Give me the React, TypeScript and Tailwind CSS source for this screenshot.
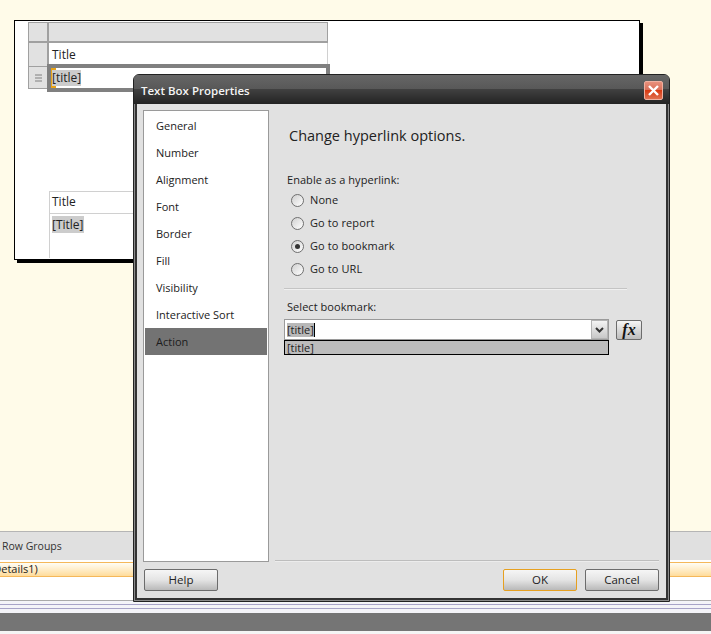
const navItems = ["General", "Number", "Alignment", "Font", "Border", "Fill", "Visibility", "Interactive Sort", "Action"];
const radios = ["None", "Go to report", "Go to bookmark", "Go to URL"];

function Radio({ label, checked }: { label: string; checked?: boolean }) {
  return (
    <div className="flex h-[23px] items-center">
      <span className="flex h-[13px] w-[13px] items-center justify-center rounded-full border border-[#6f6f6f] bg-gradient-to-br from-[#d0d0d0] to-white">
        {checked && <span className="h-[5px] w-[5px] rounded-full bg-[#333]" />}
      </span>
      <span className="ml-[6px] text-[11px] tracking-[0.1px] text-[#222]">{label}</span>
    </div>
  );
}

function DialogButton({ label, primary }: { label: string; primary?: boolean }) {
  return (
    <button
      className={
        "h-[22px] w-[74px] rounded-[2px] border bg-gradient-to-b from-[#f6f6f6] via-[#e4e4e4] to-[#b9b9b9] text-[11.5px] text-[#222] " +
        (primary ? "border-[#e6a020]" : "border-[#6c6c6c]")
      }
    >
      {label}
    </button>
  );
}

function TextBoxDialog() {
  return (
    <div className="absolute left-[133px] top-[74px] flex h-[528px] w-[537px] flex-col rounded-t-[6px] border border-[#222] bg-[#e1e1e1] shadow-[inset_0_0_0_1px_#8a8a8a,inset_0_0_0_3px_#333]">
      <div className="flex h-[29px] shrink-0 items-center justify-between rounded-t-[5px] bg-[linear-gradient(#666_0%,#585858_48%,#404040_50%,#232323_100%)] pl-[7px] pr-[6px] pt-[2px]">
        <span className="text-[11.5px] font-semibold text-[#f4f4f4]">Text Box Properties</span>
        <span className="flex h-[19px] w-[19px] items-center justify-center rounded-[2px] border border-[#f0b0a0] bg-[linear-gradient(#e8907c_0%,#d9705a_45%,#d93a12_50%,#e07050_100%)]">
          <svg width="13" height="13" viewBox="0 0 13 13">
            <path d="M2 2 L11 11 M11 2 L2 11" stroke="#fff" strokeWidth="2.4" />
          </svg>
        </span>
      </div>
      <div className="flex min-h-0 flex-1 pb-[10px] pl-[9px] pr-[10px] pt-[6px]">
        <div className="flex w-[126px] shrink-0 flex-col">
          <div className="h-[452px] shrink-0 border border-[#9a9a9a] bg-white px-px pt-px">
            {navItems.map((item) => (
              <div
                key={item}
                className={
                  "flex h-[27px] items-center pl-[11px] pt-[2px] text-[11px] " +
                  (item === "Action" ? "bg-[#737373] text-[#1c1c1c]" : "text-[#222]")
                }
              >
                {item}
              </div>
            ))}
          </div>
          <div className="mt-[7px] flex pl-px">
            <DialogButton label="Help" />
          </div>
        </div>
        <div className="flex min-w-0 flex-1 flex-col">
          <div className="flex-1 pl-[15px] pr-[32px]">
            <div className="pl-[5px] pt-[15px] text-[14.5px] leading-[21px] text-[#222]">Change hyperlink options.</div>
            <div className="pl-[3px] pt-[26px] text-[11px] leading-[16px] tracking-[0.05px] text-[#222]">Enable as a hyperlink:</div>
            <div className="pl-[7px] pt-[1px]">
              {radios.map((radio) => (
                <Radio key={radio} label={radio} checked={radio === "Go to bookmark"} />
              ))}
            </div>
            <div className="mt-[7px] h-[2px] border-t border-[#c4c4c4] bg-[#f0f0f0]" />
            <div className="pl-[3px] pt-[9px] text-[11px] leading-[16px] tracking-[0.05px] text-[#222]">Select bookmark:</div>
            <div className="relative mt-[4px] flex w-[358px]">
              <div className="w-[325px]">
                <div className="flex h-[21px] items-center justify-between border border-[#9a9a9a] bg-white pl-[2px]">
                  <span className="flex items-center text-[11px] text-[#222]">
                    <span className="bg-[#b8b8b8] leading-[14px]">[title]</span>
                    <span className="h-[14px] w-px bg-black" />
                  </span>
                  <span className="flex h-[19px] w-[17px] items-center justify-center border border-[#b4b4b4] bg-gradient-to-b from-[#f4f4f4] to-[#c8c8c8]">
                    <svg width="9" height="6" viewBox="0 0 9 6">
                      <path d="M1 1 L4.5 4.5 L8 1" fill="none" stroke="#333" strokeWidth="2" />
                    </svg>
                  </span>
                </div>
                <div className="h-[15px] border border-black bg-[#bcbcbc] pl-[2px] text-[11px] leading-[14px] text-[#222]">[title]</div>
              </div>
              <span className="ml-[7px] mt-px flex h-[20px] w-[26px] items-center justify-center rounded-[2px] border border-[#6c6c6c] bg-gradient-to-b from-[#f6f6f6] to-[#bdbdbd] font-['Liberation_Serif',serif] text-[16px] font-bold italic leading-none text-[#111]">
                fx
              </span>
            </div>
          </div>
          <div className="ml-[6px] h-[2px] shrink-0 border-t border-[#bdbdbd] bg-[#ececec]" />
          <div className="flex shrink-0 justify-end gap-[8px] pt-[7px]">
            <DialogButton label="OK" primary />
            <DialogButton label="Cancel" />
          </div>
        </div>
      </div>
    </div>
  );
}

function DesignTable() {
  return (
    <div className="relative ml-[13px] mt-px w-[300px] text-[12px] text-[#222]">
      <div className="grid grid-cols-[21px_279px] grid-rows-[21px_23px_23px]">
        <div className="border border-b-2 border-r-2 border-[#a0a0a0] bg-[#e1e1e1]" />
        <div className="border border-b-2 border-l-0 border-[#a0a0a0] bg-[#e1e1e1]" />
        <div className="border-x border-r-2 border-[#a0a0a0] bg-[#e1e1e1]" />
        <div className="flex items-center border-r border-[#d0d0d0] pl-[3px]">Title</div>
        <div className="flex items-center justify-center border border-r-2 border-[#a0a0a0] bg-[#e1e1e1]">
          <svg width="9" height="8" viewBox="0 0 9 8">
            <path d="M1 1 H8 M1 4 H8 M1 7 H8" stroke="#808080" strokeWidth="1" />
          </svg>
        </div>
        <div />
      </div>
      <div className="absolute left-[19px] top-[42px] flex h-[28px] w-[283px] items-center border-4 border-[#808080] bg-white">
        <span className="h-full w-[5px] bg-[#e8a317]" />
        <span className="-ml-[4px] bg-[#cccccc] leading-[16px]">[title]</span>
      </div>
    </div>
  );
}

function ReportPage() {
  return (
    <div className="h-[240px] w-[626px] border border-black bg-white shadow-[3px_3px_0_#000]">
      <DesignTable />
      <div className="ml-[34px] mt-[102px] w-[200px] border-l border-[#d0d0d0] text-[12px] text-[#222]">
        <div className="flex h-[23px] items-center border-y border-[#d0d0d0] pb-[2px] pl-[2px]">Title</div>
        <div className="h-[44px] pl-[2px] pt-[2px]">
          <span className="bg-[#cccccc] leading-[16px]">[Title]</span>
        </div>
      </div>
    </div>
  );
}

export default function App() {
  return (
    <div className="relative flex h-[634px] w-[711px] flex-col overflow-hidden bg-[#fffbe9] font-['Open_Sans',sans-serif]">
      <div className="h-[531px] shrink-0 pl-[14px] pt-[20px]">
        <ReportPage />
      </div>
      <div className="flex h-[29px] shrink-0 items-center border-t border-[#b5b5b5] bg-[#e0e0e0] pl-[2px] pt-[2px] text-[10.5px] text-[#333]">Row Groups</div>
      <div className="h-[41px] shrink-0 border-b border-[#aaa] bg-white pt-[2px]">
        <div className="flex h-[15px] items-center overflow-hidden border-y border-[#f5b85a] bg-gradient-to-b from-[#fffdf5] to-[#ffdc9a] text-[11px] text-[#222]">
          <span className="-ml-[10px]">(Details1)</span>
        </div>
      </div>
      <div className="h-[3px] shrink-0 bg-[#f4f4f8]" />
      <div className="h-[4px] shrink-0 border-t border-[#a8a4c8] bg-[#f4f4f8]" />
      <div className="h-[5px] shrink-0 border-t border-[#a8a4c8] bg-[#f4f4f8]" />
      <div className="h-[18px] shrink-0 bg-[#757575]" />
      <div className="flex-1 bg-[#f5f5f5]" />
      <TextBoxDialog />
    </div>
  );
}
